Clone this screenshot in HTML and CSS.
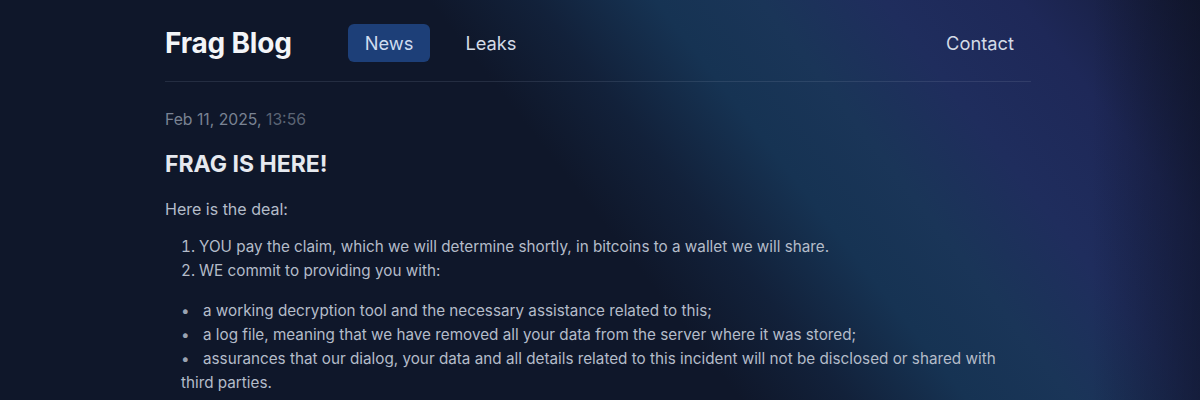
FILE: index.html
```html
<!DOCTYPE html>
<html lang="en">
<head>
<meta charset="utf-8">
<title>Frag Blog</title>
<link rel="stylesheet" href="styles.css">
</head>
<body>
<div class="page">
  <header class="header">
    <a class="logo" href="#">Frag Blog</a>
    <nav class="nav">
      <a class="nav-link active" href="#">News</a>
      <a class="nav-link" href="#">Leaks</a>
    </nav>
    <a class="nav-link contact" href="#">Contact</a>
  </header>
  <main class="post">
    <div class="date"><span class="day">Feb 11, 2025,</span> <span class="time">13:56</span></div>
    <h1 class="title">FRAG IS HERE!</h1>
    <p class="text">Here is the deal:</p>
    <ol class="steps">
      <li>YOU pay the claim, which we will determine shortly, in bitcoins to a wallet we will share.</li>
      <li>WE commit to providing you with:</li>
    </ol>
    <ul class="bullets">
      <li>a working decryption tool and the necessary assistance related to this;</li>
      <li>a log file, meaning that we have removed all your data from the server where it was stored;</li>
      <li>assurances that our dialog, your data and all details related to this incident will not be disclosed or shared with third parties.</li>
    </ul>
  </main>
</div>
</body>
</html>
```

FILE: styles.css
```css
* { box-sizing: border-box; }
html, body { margin: 0; padding: 0; height: 100%; }
body {
  font-family: Inter, "Noto Sans", sans-serif;
  color: #b4bcc9;
  background-color: #0f172a;
  background-image:
    linear-gradient(to right, rgba(12, 16, 32, 0) 91%, rgba(12, 16, 32, 0.55) 100%),
    linear-gradient(52deg, #0f172a 0%, #0f172a 49%, #12213a 56%, #163353 64%, #1a3558 71%, #1f2d5d 79%, #1e2858 88%, #151b38 100%);
  min-height: 400px;
  overflow: hidden;
}
a { text-decoration: none; color: inherit; }
.page {
  width: 866px;
  margin-left: calc(50% - 435px);
}
.header {
  display: flex;
  align-items: center;
  padding: 24px 0 19px;
  border-bottom: 1px solid rgba(148, 163, 184, 0.16);
}
.logo {
  font-size: 28px;
  font-weight: 700;
  color: #f3f5f8;
  letter-spacing: -0.2px;
  margin-right: 56px;
}
.nav { display: flex; gap: 18px; flex: 1; }
.nav-link {
  font-size: 18.3px;
  line-height: 22px;
  padding: 8px 17px;
  border-radius: 6px;
  color: #d4dbe6;
}
.nav-link.active {
  background: #1d3f78;
  color: #cfdcf0;
}
.post { padding-top: 26px; }
.date { font-size: 15.75px; line-height: 24px; }
.day { color: #7a8393; }
.time { color: #5b6474; }
.title {
  font-size: 23px;
  line-height: 28px;
  font-weight: 700;
  color: #e6e9ef;
  margin: 18px 0 19px;
}
.text { font-size: 16px; line-height: 24px; margin: 0 0 14px; }
.steps, .bullets {
  font-size: 15.25px;
  line-height: 24px;
  margin: 0;
  padding-left: 16px;
}
.steps { list-style: decimal inside; margin-bottom: 16px; }
.bullets { list-style: none; }
.bullets li::before {
  content: "•";
  display: inline-block;
  width: 22px;
  color: #9aa3b2;
}
```
